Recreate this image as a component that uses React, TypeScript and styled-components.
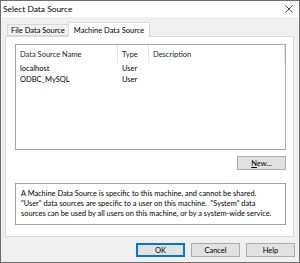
import React from "react";
import styled, { createGlobalStyle } from "styled-components";

const GlobalStyle = createGlobalStyle`
  html, body {
    margin: 0;
    padding: 0;
    background: #f0f0f0;
  }
  * {
    box-sizing: border-box;
  }
`;

const Window = styled.div`
  width: 300px;
  height: 263px;
  border: 1px solid #6f6f6f;
  background: #f0f0f0;
  font-family: Lato, "Noto Sans", sans-serif;
  font-size: 7.5px;
  color: #000;
  display: flex;
  flex-direction: column;
`;

const TitleBar = styled.div`
  height: 16px;
  background: #fff;
  display: flex;
  align-items: center;
  justify-content: space-between;
  padding: 0 4px 0 2px;
  font-size: 8.4px;
`;

const CloseButton = styled.button`
  background: transparent;
  border: 0;
  padding: 0;
  width: 12px;
  height: 12px;
  display: flex;
  align-items: center;
  justify-content: center;
`;

const Body = styled.div`
  flex: 1;
  padding: 5px 4px 0 4px;
  display: flex;
  flex-direction: column;
`;

const TabStrip = styled.div`
  display: flex;
  align-items: flex-end;
  padding-left: 2px;
  height: 14px;
`;

const Tab = styled.div<{ $active?: boolean }>`
  height: ${(p) => (p.$active ? "15px" : "12px")};
  padding: 0 ${(p) => (p.$active ? "5px" : "3px")};
  margin-bottom: ${(p) => (p.$active ? "-1px" : "0")};
  margin-left: ${(p) => (p.$active ? "-1px" : "0")};
  background: ${(p) => (p.$active ? "#fff" : "#f0f0f0")};
  border: 1px solid #d9d9d9;
  border-bottom: ${(p) => (p.$active ? "0" : "1px solid #d9d9d9")};
  display: flex;
  align-items: center;
  position: relative;
  z-index: ${(p) => (p.$active ? 1 : 0)};
  white-space: nowrap;
`;

const Panel = styled.div`
  width: 289px;
  height: 201px;
  background: #fff;
  border: 1px solid #d9d9d9;
  padding: 7px 7px 0 9px;
  display: flex;
  flex-direction: column;
`;

const ListView = styled.div`
  width: 271px;
  height: 106px;
  border: 1px solid #a5a7ab;
  background: #fff;
`;

const HeaderRow = styled.div`
  display: flex;
  height: 18px;
`;

const HeaderCell = styled.div<{ $w: number }>`
  width: ${(p) => p.$w}px;
  padding-left: 4px;
  display: flex;
  align-items: center;
  border-right: 1px solid #e5e5e5;
  color: #1e1e1e;
`;

const Row = styled.div`
  display: flex;
  height: 11px;
  align-items: center;
`;

const Cell = styled.div<{ $w: number }>`
  width: ${(p) => p.$w}px;
  padding-left: 4px;
  white-space: nowrap;
`;

const ButtonLine = styled.div`
  display: flex;
  justify-content: flex-end;
  width: 271px;
  margin-top: 6px;
`;

const PushButton = styled.button<{ $default?: boolean }>`
  width: 49px;
  height: 14px;
  padding: 0;
  font-family: inherit;
  font-size: 7.5px;
  color: #000;
  background: #e1e1e1;
  border: 1px solid ${(p) => (p.$default ? "#0078d7" : "#adadad")};
  box-shadow: ${(p) => (p.$default ? "inset 0 0 0 1px #0078d7" : "none")};
  display: flex;
  align-items: center;
  justify-content: center;
`;

const InfoBox = styled.div`
  width: 271px;
  height: 42px;
  margin-top: 13px;
  border: 1px solid #a0a0a0;
  padding: 5px 5px;
  line-height: 9.8px;
  font-size: 7.4px;
  white-space: nowrap;
`;

const Footer = styled.div`
  display: flex;
  justify-content: flex-end;
  gap: 6px;
  padding: 6px 0 0 0;
`;

const columns = [
  { name: "Data Source Name", w: 102 },
  { name: "Type", w: 31 },
  { name: "Description", w: 136 },
];

const sources = [
  { name: "localhost", type: "User" },
  { name: "ODBC_MySQL", type: "User" },
];

export default function App() {
  return (
    <>
      <GlobalStyle />
      <Window>
        <TitleBar>
          <span>Select Data Source</span>
          <CloseButton>
            <svg width="8" height="8" viewBox="0 0 8 8">
              <path d="M0.5 0.5 L7.5 7.5 M7.5 0.5 L0.5 7.5" stroke="#333" strokeWidth="0.9" />
            </svg>
          </CloseButton>
        </TitleBar>
        <Body>
          <TabStrip>
            <Tab>File Data Source</Tab>
            <Tab $active>Machine Data Source</Tab>
          </TabStrip>
          <Panel>
            <ListView>
              <HeaderRow>
                {columns.map((c) => (
                  <HeaderCell key={c.name} $w={c.w}>
                    {c.name}
                  </HeaderCell>
                ))}
              </HeaderRow>
              {sources.map((s) => (
                <Row key={s.name}>
                  <Cell $w={102}>{s.name}</Cell>
                  <Cell $w={31}>{s.type}</Cell>
                  <Cell $w={136}></Cell>
                </Row>
              ))}
            </ListView>
            <ButtonLine>
              <PushButton>
                <span>
                  <u>N</u>ew...
                </span>
              </PushButton>
            </ButtonLine>
            <InfoBox>
              A Machine Data Source is specific to this machine, and cannot be shared.
              <br />
              "User" data sources are specific to a user on this machine.&nbsp; "System" data
              <br />
              sources can be used by all users on this machine, or by a system-wide service.
            </InfoBox>
          </Panel>
          <Footer>
            <PushButton $default>OK</PushButton>
            <PushButton>Cancel</PushButton>
            <PushButton>Help</PushButton>
          </Footer>
        </Body>
      </Window>
    </>
  );
}
